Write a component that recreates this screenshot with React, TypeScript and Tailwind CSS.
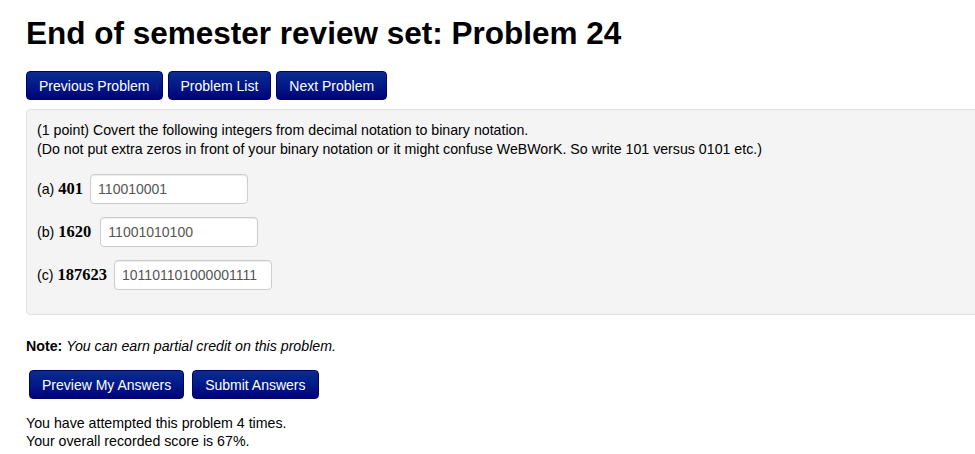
import React from "react";

const btn =
  "h-[29px] px-[12px] rounded-[4px] text-white text-[14px] leading-[20px] bg-gradient-to-b from-[#0c2b92] to-[#00007a] border border-[#000066]";

function MathNum({ children }: { children: React.ReactNode }) {
  return (
    <span className="font-bold text-[16.5px]" style={{ fontFamily: '"Liberation Serif", "Times New Roman", serif' }}>
      {children}
    </span>
  );
}

function Row({ label, num, value, gap }: { label: string; num: string; value: string; gap: string }) {
  return (
    <div className={"flex items-center h-[29px] " + gap}>
      <span className="flex items-baseline gap-[4px]">
        <span>{label}</span>
        <MathNum>{num}</MathNum>
      </span>
      <input
        readOnly
        value={value}
        className="w-[158px] h-[30px] px-[7px] text-[14px] text-[#555] bg-white border border-[#cccccc] rounded-[4px] outline-none shadow-[inset_0_1px_1px_rgba(0,0,0,0.075)]"
        style={{ fontFamily: '"Liberation Sans", Arial, sans-serif' }}
      />
    </div>
  );
}

export default function App() {
  return (
    <div
      className="bg-white text-black min-h-[454px] pl-[26px] overflow-hidden"
      style={{ fontFamily: '"Liberation Sans", Arial, sans-serif' }}
    >
      <h1 className="text-[31.5px] font-bold leading-[36px] pt-[15px]">
        End of semester review set: Problem 24
      </h1>
      <div className="flex gap-[5px] mt-[20px]">
        <button className={btn}>Previous Problem</button>
        <button className={btn}>Problem List</button>
        <button className={btn}>Next Problem</button>
      </div>
      <div className="mt-[9px] w-[1000px] h-[206px] bg-[#f4f4f4] border border-[#e0e0e0] rounded-[4px] pl-[10px] pt-[11px] text-[14.2px] leading-[19px]">
        <div>(1 point) Covert the following integers from decimal notation to binary notation.</div>
        <div>(Do not put extra zeros in front of your binary notation or it might confuse WeBWorK. So write 101 versus 0101 etc.)</div>
        <div className="flex flex-col gap-[14px] mt-[15px]">
          <Row label="(a)" num="401" value="110010001" gap="gap-[7px]" />
          <Row label="(b)" num="1620" value="11001010100" gap="gap-[9px]" />
          <Row label="(c)" num="187623" value="101101101000001111" gap="gap-[7px]" />
        </div>
      </div>
      <div className="mt-[22px] text-[14.2px] leading-[19px]">
        <b>Note:</b> <i>You can earn partial credit on this problem.</i>
      </div>
      <div className="flex gap-[8px] mt-[14px] ml-[3px]">
        <button className={btn}>Preview My Answers</button>
        <button className={btn}>Submit Answers</button>
      </div>
      <div className="mt-[15px] text-[14.2px] leading-[18px]">
        <div>You have attempted this problem 4 times.</div>
        <div>Your overall recorded score is 67%.</div>
      </div>
    </div>
  );
}
